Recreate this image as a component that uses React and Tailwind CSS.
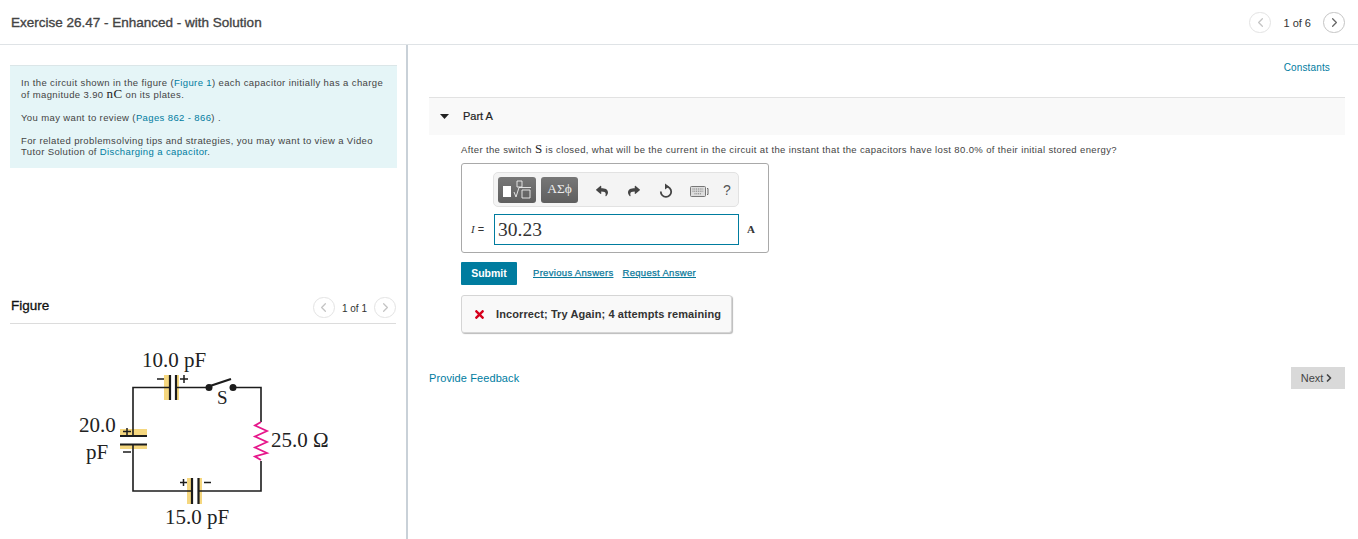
import { ChevronLeft, ChevronRight } from 'lucide-react';
import { FaReply, FaShare, FaTimes } from 'react-icons/fa';

function NavCircle({ dir, dim }) {
  const Icon = dir === 'left' ? ChevronLeft : ChevronRight;
  return (
    <span className={`flex h-[21px] w-[22px] items-center justify-center rounded-full border ${dim ? 'border-[#e3e3e3] text-[#c4c4c4]' : 'border-[#c4c4c4] text-[#666]'}`}>
      <Icon size={15} strokeWidth={2} />
    </span>
  );
}

// circuit drawing from the textbook figure
function Circuit() {
  return (
    <svg width="340" height="190" viewBox="0 345 340 190" className="block" style={{ fontFamily: '"Liberation Serif", serif' }}>
      <path d="M164 375H170V400H164ZM176 375H179V400H176ZM120 429H147V436H120ZM120 444.500H147V449H120ZM187 478H192V504H187ZM198.500 478H202V504H198.500Z" fill="#f5d77f" />
      <path d="M170 387.5H133V435M133 444V491H192M198 491H261V461M261 422V387.5H233M209 387.5H176" fill="none" stroke="#1c1c1c" strokeWidth="1.6" />
      <path d="M170 375V400M176 375V400M192 478V504M198.500 478V504M120 436H147M120 444.500H147" stroke="#1c1c1c" strokeWidth="2.200" fill="none" />
      <path d="M157 379H164M180 379H188M184 375V383M123 431.500H131M127 428V435M123 452H131M180 482.500H187M183.500 479V486M204 482.500H211" stroke="#1c1c1c" strokeWidth="1.500" fill="none" />
      <circle cx="209" cy="387.500" r="3.500" fill="#1c1c1c" />
      <circle cx="233" cy="387.500" r="3.500" fill="#1c1c1c" />
      <path d="M210 386L231 379" stroke="#1c1c1c" strokeWidth="2.200" />
      <path d="M261 422L255 425.500L267 431L255 436.500L267 442L255 447.500L267 453L255 456.500L261 460" fill="none" stroke="#e6178b" strokeWidth="1.800" />
      <g fontSize="21" fill="#222">
        <text x="142" y="367">10.0 pF</text>
        <text x="79" y="432">20.0</text>
        <text x="86" y="459">pF</text>
        <text x="271" y="447">25.0 Ω</text>
        <text x="165" y="524">15.0 pF</text>
        <text x="217" y="404" fontSize="19">S</text>
      </g>
    </svg>
  );
}

function KeyboardIcon() {
  return (
    <svg width="19" height="11" viewBox="0 0 19 11">
      <rect x="0.500" y="0.500" width="15" height="10" rx="1" fill="#ddd" stroke="#777" />
      <path d="M2.500 3H13.500M2.500 5.200H13.500M4.500 7.800H11.500" stroke="#777" strokeWidth="1" strokeDasharray="1 0.800" />
      <path d="M17 2.500H18V8.500H17" fill="none" stroke="#666" />
    </svg>
  );
}

function RedoIcon() {
  return (
    <svg width="14" height="16" viewBox="0 0 14 16" className="text-[#444]">
      <path d="M7 3.500A5.200 5.200 0 1 1 1.800 8.500" fill="none" stroke="currentColor" strokeWidth="1.800" />
      <path d="M6 0.500L10 3.500L6 6.500Z" fill="currentColor" />
    </svg>
  );
}

export default function App() {
  return (
    <div className="h-[539px] w-[1358px] overflow-hidden bg-white text-[#333]" style={{ fontFamily: '"Liberation Sans", Arial, sans-serif' }}>
      <header className="flex h-[45px] items-center justify-between border-b border-[#dfe3e6] pl-[11px] pr-[13px]">
        <h1 className="pt-[2px] text-[13.500px] font-normal text-[#444] [-webkit-text-stroke:0.35px_#444]">Exercise 26.47 - Enhanced - with Solution</h1>
        <div className="flex items-center">
          <NavCircle dir="left" dim />
          <span className="mx-[12px] mt-[2px] text-[11px] text-[#333]">1 of 6</span>
          <NavCircle dir="right" />
        </div>
      </header>

      <div className="flex h-[494px]">
        <aside className="w-[408px] shrink-0 border-r-2 border-[#c9d1d8] pl-[10px] pr-[10px] pt-[20px]">
          <section className="-mr-[1px] h-[103px] border-t border-[#dbe6e8] bg-[#e5f5f7] px-[11px] pt-[11px] text-[9.500px] leading-[12px] tracking-[0.38px] text-[#444]">
            <p>
              In the circuit shown in the figure (<a className="text-[#007c9f]">Figure 1</a>) each capacitor initially has a charge of magnitude 3.90 <span className="text-[13px] leading-[10px] text-[#222]" style={{ fontFamily: '"Liberation Serif", serif' }}>nC</span> on its plates.
            </p>
            <p className="mt-[11px]">You may want to review (<a className="text-[#007c9f]">Pages 862 - 866</a>) .</p>
            <p className="mt-[11px] leading-[11px]">
              For related problemsolving tips and strategies, you may want to view a Video Tutor Solution of <a className="text-[#007c9f]">Discharging a capacitor</a>.
            </p>
          </section>

          <div className="mt-[128px] flex h-[28px] items-start justify-between border-b border-[#dcdcdc]">
            <h2 className="pl-[1px] text-[13.500px] text-[#111] [-webkit-text-stroke:0.3px_#111]">Figure</h2>
            <div className="mt-[1px] flex items-center">
              <NavCircle dir="left" dim />
              <span className="mx-[7px] mt-[1px] text-[10px] text-[#333]">1 of 1</span>
              <NavCircle dir="right" dim />
            </div>
          </div>
          <div className="-ml-[10px]">
            <div className="mt-[21px]"><Circuit /></div>
          </div>
        </aside>

        <main className="min-w-0 flex-1 pl-[21px] pr-[13px]">
          <div className="flex h-[52px] justify-end pr-[15px] pt-[15px] text-[10px] tracking-[0.15px] text-[#007c9f]">Constants</div>

          <div className="flex h-[38px] items-center border-t border-[#e2e2e2] bg-[#f9f9f9] pl-[11px]">
            <svg width="9" height="5" viewBox="0 0 9 5"><path d="M0 0H9L4.500 5Z" fill="#222" /></svg>
            <span className="ml-[14px] text-[11px] text-[#222] [-webkit-text-stroke:0.2px_#222]">Part A</span>
          </div>

          <div className="pl-[32px]">
            <p className="mt-[5px] h-[23px] text-[9.500px] leading-[18px] tracking-[0.37px] text-[#444]">
              After the switch <span className="text-[13px] text-[#222]" style={{ fontFamily: '"Liberation Serif", serif' }}>S</span> is closed, what will be the current in the circuit at the instant that the capacitors have lost 80.0% of their initial stored energy?
            </p>

            <div className="h-[90px] w-[308px] rounded-[3px] border border-[#a9a9a9] pl-[31px] pt-[8px]">
              <div className="flex h-[35px] w-[246px] items-center rounded-[5px] border border-[#e2e2e2] bg-[#f4f4f4] pl-[4px]">
                <span className="flex h-[26px] w-[38px] items-center justify-center gap-[2px] rounded-[3px] bg-gradient-to-b from-[#777] to-[#5f5f5f]">
                  <span className="mt-[3px] h-[11px] w-[8px] bg-white" />
                  <svg width="19" height="20" viewBox="0 0 19 20"><path d="M4 1H9V7H4ZM1 12L3 17L6 7.500H18M9 10H17V18H9Z" fill="none" stroke="#eee" strokeWidth="0.900" /></svg>
                </span>
                <span className="ml-[5px] flex h-[26px] w-[37px] items-center justify-center rounded-[3px] bg-gradient-to-b from-[#777] to-[#5f5f5f] text-[13.500px] text-[#eee]" style={{ fontFamily: '"Liberation Serif", serif' }}>ΑΣϕ</span>
                <FaReply size={12} className="ml-[18px] mt-[3px] text-[#444]" />
                <FaShare size={12} className="ml-[20px] mt-[3px] text-[#444]" />
                <span className="ml-[19px] mt-[2px]"><RedoIcon /></span>
                <span className="ml-[17px] mt-[4px]"><KeyboardIcon /></span>
                <span className="ml-[14px] mt-[2px] text-[14px] text-[#555]">?</span>
              </div>
              <div className="relative mt-[7px] flex items-center">
                <span className="absolute -left-[22px] text-[11px] text-[#333]"><i style={{ fontFamily: '"Liberation Serif", serif' }}>I</i> =</span>
                <div className="ml-[1px] flex h-[31px] w-[245px] items-center border border-[#007c9f] pl-[3px] text-[19.500px] text-[#333]" style={{ fontFamily: '"Liberation Serif", serif' }}>30.23</div>
                <span className="ml-[8px] text-[11px] font-bold text-[#333]" style={{ fontFamily: '"Liberation Serif", serif' }}>A</span>
              </div>
            </div>

            <div className="mt-[9px] flex h-[23px] items-center">
              <button className="h-[23px] w-[56px] rounded-[1px] bg-[#007c9f] text-[10.500px] font-bold text-white">Submit</button>
              <a className="ml-[16px] text-[9.500px] tracking-[0.31px] text-[#0a7a9b] underline [-webkit-text-stroke:0.25px_#0a7a9b]">Previous Answers</a>
              <a className="ml-[9px] text-[9.500px] tracking-[0.31px] text-[#0a7a9b] underline [-webkit-text-stroke:0.25px_#0a7a9b]">Request Answer</a>
            </div>

            <div className="mt-[10px] flex h-[38px] w-[271px] items-center rounded-[3px] border border-[#d5d5d5] bg-[#f9f9f9] pl-[11px] shadow-[1px_1px_1px_#bbb]">
              <FaTimes size={13} className="text-[#d6001c]" />
              <span className="ml-[10px] mt-[1px] text-[11px] font-bold tracking-[0.1px] text-[#333]">Incorrect; Try Again; 4 attempts remaining</span>
            </div>
          </div>

          <div className="mt-[34px] flex items-center justify-between">
            <a className="text-[11px] tracking-[0.1px] text-[#007c9f]">Provide Feedback</a>
            <button className="flex h-[22px] w-[54px] items-center justify-center bg-[#d9d9d9] text-[11px] text-[#444]">
              Next <ChevronRight size={12} strokeWidth={3.500} />
            </button>
          </div>
        </main>
      </div>
    </div>
  );
}
